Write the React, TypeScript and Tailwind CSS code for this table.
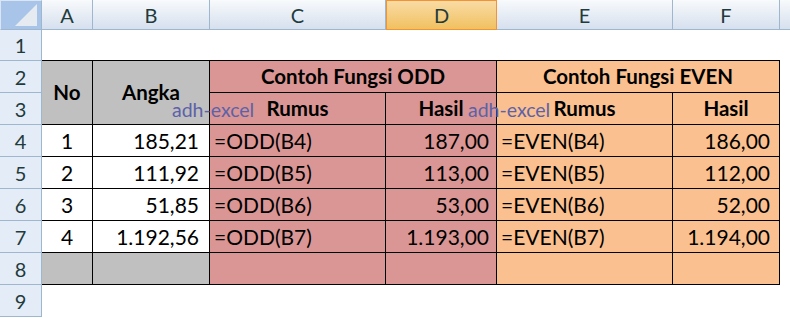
import React from "react";

const cols = ["A", "B", "C", "D", "E", "F"];

const rows = [
  { no: "1", angka: "185,21", odd: "=ODD(B4)", oddVal: "187,00", even: "=EVEN(B4)", evenVal: "186,00" },
  { no: "2", angka: "111,92", odd: "=ODD(B5)", oddVal: "113,00", even: "=EVEN(B5)", evenVal: "112,00" },
  { no: "3", angka: "51,85", odd: "=ODD(B6)", oddVal: "53,00", even: "=EVEN(B6)", evenVal: "52,00" },
  { no: "4", angka: "1.192,56", odd: "=ODD(B7)", oddVal: "1.193,00", even: "=EVEN(B7)", evenVal: "1.194,00" },
];

function RowHead({ n }: { n: number }) {
  return (
    <div className="flex items-center justify-center bg-[#e4ecf7] border-r border-b border-[#9eb6ce] text-[20px] text-[#1f3b3c]">
      {n}
    </div>
  );
}

const cell = "flex items-center border-r border-b border-black px-1";
const head = "flex items-center border-r border-b border-black justify-center font-bold text-[20.5px]";

export default function App() {
  return (
    <div className="relative w-[790px] h-[318px] overflow-hidden bg-white font-['Lato','Liberation_Sans',sans-serif] text-[21px] text-black">
      <div className="grid grid-cols-[42px_51px_117px_176px_111px_176px_107px_10px] grid-rows-[30px_31px_repeat(8,32px)]">
        {/* column headers */}
        <div className="relative bg-[#a9c4e9] border border-[#dbe6f5] border-r-[#9eb6ce] border-b-[#9eb6ce]">
          <div className="absolute right-[4px] bottom-[3px] w-0 h-0 border-l-[22px] border-l-transparent border-b-[22px] border-b-[#e6ebf1]" />
        </div>
        {cols.map((c) =>
          c === "D" ? (
            <div
              key={c}
              className="flex items-center justify-center border border-[#f29436] bg-gradient-to-b from-[#f9dba3] to-[#f1c15f] text-[20px] text-[#1f3b3c]"
            >
              {c}
            </div>
          ) : (
            <div
              key={c}
              className="flex items-center justify-center border-r border-b border-[#9eb6ce] bg-gradient-to-b from-[#f8fafc] to-[#d6e0ee] text-[20px] text-[#1f3b3c]"
            >
              {c}
            </div>
          )
        )}
        <div className="border-b border-[#9eb6ce] bg-gradient-to-b from-[#f8fafc] to-[#d6e0ee]" />

        {/* row 1 */}
        <RowHead n={1} />
        {cols.map((c) => (
          <div key={c} className="border-b border-black" />
        ))}
        <div />

        {/* rows 2-3 */}
        <RowHead n={2} />
        <div className={`${head} row-span-2 bg-[#c0c0c0]`}>No</div>
        <div className={`${head} row-span-2 bg-[#c0c0c0]`}>Angka</div>
        <div className={`${head} col-span-2 bg-[#da9694]`}>Contoh Fungsi ODD</div>
        <div className={`${head} col-span-2 bg-[#fac090]`}>Contoh Fungsi EVEN</div>
        <div />
        <RowHead n={3} />
        <div className={`${head} bg-[#da9694]`}>Rumus</div>
        <div className={`${head} bg-[#da9694]`}>Hasil</div>
        <div className={`${head} bg-[#fac090]`}>Rumus</div>
        <div className={`${head} bg-[#fac090]`}>Hasil</div>
        <div />

        {/* data */}
        {rows.map((r, i) => (
          <React.Fragment key={r.no}>
            <RowHead n={i + 4} />
            <div className={`${cell} justify-center`}>{r.no}</div>
            <div className={`${cell} justify-end pr-[10px]`}>{r.angka}</div>
            <div className={`${cell} bg-[#da9694]`}>{r.odd}</div>
            <div className={`${cell} justify-end pr-[7px] bg-[#da9694]`}>{r.oddVal}</div>
            <div className={`${cell} bg-[#fac090]`}>{r.even}</div>
            <div className={`${cell} justify-end pr-[9px] bg-[#fac090]`}>{r.evenVal}</div>
            <div />
          </React.Fragment>
        ))}

        {/* row 8 */}
        <RowHead n={8} />
        <div className={`${cell} bg-[#c0c0c0]`} />
        <div className={`${cell} bg-[#c0c0c0]`} />
        <div className={`${cell} bg-[#da9694]`} />
        <div className={`${cell} bg-[#da9694]`} />
        <div className={`${cell} bg-[#fac090]`} />
        <div className={`${cell} bg-[#fac090]`} />
        <div />

        {/* row 9 */}
        <RowHead n={9} />
      </div>

      {/* watermarks */}
      <span className="absolute left-[172px] top-[100px] text-[19.5px] leading-none text-[#5c62a8]">adh-excel</span>
      <span className="absolute left-[468px] top-[100px] text-[19.5px] leading-none text-[#5c62a8]">adh-excel</span>
    </div>
  );
}
